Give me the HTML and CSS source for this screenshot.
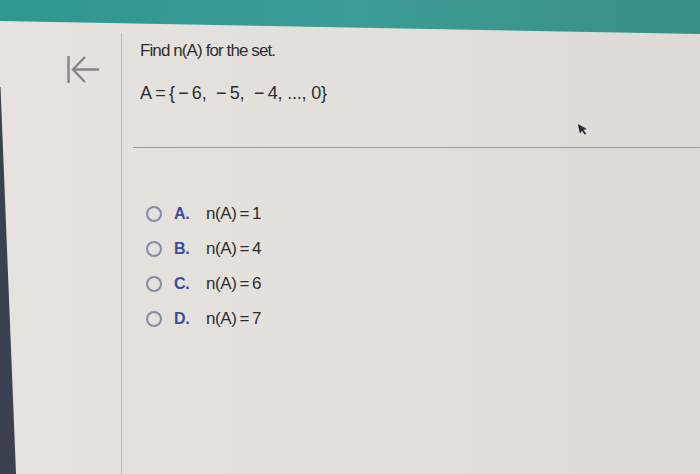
FILE: index.html
```html
<!DOCTYPE html>
<html>
<head>
<meta charset="utf-8">
<link rel="stylesheet" href="styles.css">
</head>
<body>
<div class="topbar"></div>
<div class="page">
  <aside class="sidebar">
    <svg class="back" width="32" height="30" viewBox="0 0 32 30">
      <path d="M1.5 1 V28 M6 14.5 H32 M18 2 L6 14.5 L18 27" fill="none" stroke="#858588" stroke-width="2.4"/>
    </svg>
  </aside>
  <main class="main">
    <div class="question">
      <p class="q1">Find n(A) for the set.</p>
      <p class="q2">A&thinsp;=&thinsp;{&thinsp;−&thinsp;6, &nbsp;−&thinsp;5, &nbsp;−&thinsp;4, ..., 0}</p>
    </div>
    <hr class="divider">
    <ul class="options">
      <li class="opt"><span class="radio"></span><span class="letter">A.</span><span class="ans">n(A)&thinsp;=&thinsp;1</span></li>
      <li class="opt"><span class="radio"></span><span class="letter">B.</span><span class="ans">n(A)&thinsp;=&thinsp;4</span></li>
      <li class="opt"><span class="radio"></span><span class="letter">C.</span><span class="ans">n(A)&thinsp;=&thinsp;6</span></li>
      <li class="opt"><span class="radio"></span><span class="letter">D.</span><span class="ans">n(A)&thinsp;=&thinsp;7</span></li>
    </ul>
    <svg class="cursor" width="10" height="14" viewBox="0 0 10 14">
      <path d="M1 1 L1 11 L3.6 8.6 L5.6 13 L7.2 12.3 L5.3 8 L8.8 7.8 Z" fill="#2b2c33"/>
    </svg>
  </main>
</div>
</body>
</html>
```
FILE: styles.css
```css
html, body {
  margin: 0;
  padding: 0;
  width: 700px;
  height: 474px;
  overflow: hidden;
}
body {
  background: linear-gradient(90deg, #e6e3de 0%, #e3e0db 50%, #dedbd6 100%);
  font-family: "Liberation Sans", Arial, sans-serif;
  color: #2e2e30;
  display: flex;
  flex-direction: column;
}
.topbar {
  height: 34px;
  flex: none;
  background: linear-gradient(90deg, #2f9690 0%, #3b9c96 50%, #3a8f87 100%);
  clip-path: polygon(0 0, 100% 0, 100% 34px, 0 21px);
}
.page {
  flex: 1;
  display: flex;
  margin-top: -1px;
}
.sidebar {
  position: relative;
  width: 121px;
  flex: none;
  border-right: 1px solid #b9b6b1;
  display: flex;
  justify-content: flex-start;
}
.sidebar::before {
  content: "";
  position: absolute;
  left: 0;
  top: 0;
  bottom: 0;
  width: 16px;
  background: #3c4152;
  clip-path: polygon(0 54px, 0.5px 54px, 16px 100%, 0 100%);
}
.back {
  margin: 22px 0 0 67px;
}
.main {
  position: relative;
  flex: 1;
  display: flex;
  flex-direction: column;
}
.question {
  padding: 7px 0 0 18px;
}
.q1 {
  margin: 0;
  font-size: 17px;
  line-height: 22px;
  letter-spacing: -0.9px;
}
.q2 {
  margin: 19px 0 0;
  font-size: 18px;
  line-height: 24px;
  letter-spacing: -0.2px;
}
.divider {
  margin: 42px 0 0 11px;
  border: 0;
  border-top: 1px solid #9c9a97;
  height: 0;
}
.options {
  list-style: none;
  margin: 55px 0 0 24px;
  padding: 0;
  display: flex;
  flex-direction: column;
  gap: 13px;
}
.opt {
  display: flex;
  align-items: center;
  height: 22px;
  font-size: 17px;
  letter-spacing: -0.4px;
}
.radio {
  width: 12px;
  height: 12px;
  border: 2px solid #868ba6;
  border-radius: 50%;
  flex: none;
}
.letter {
  margin-left: 12px;
  width: 32px;
  font-size: 16px;
  font-weight: bold;
  color: #3a4ba0;
}
.ans {
  color: #2e2e30;
}
.cursor {
  position: absolute;
  left: 456px;
  top: 89px;
  transform: rotate(-12deg);
}
```
